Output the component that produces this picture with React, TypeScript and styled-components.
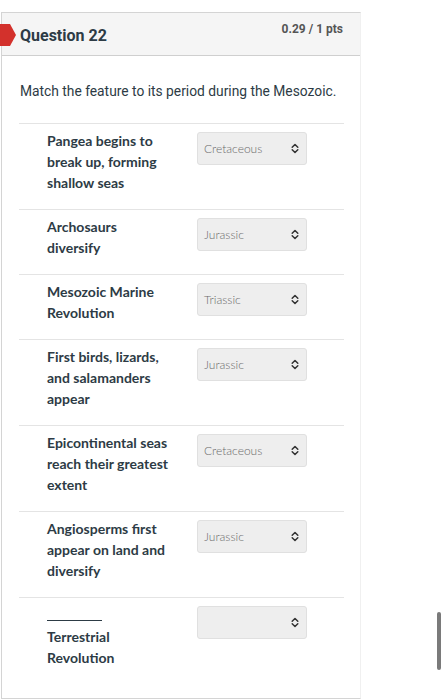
import styled, { createGlobalStyle } from 'styled-components'

const GlobalStyle = createGlobalStyle`
    html, body {
        margin: 0;
        padding: 0;
        background: #ffffff;
    }
    body {
        font-family: Roboto, "Liberation Sans", sans-serif;
        color: #2d3b45;
    }
`

const Page = styled.div`
    display: flex;
    flex-direction: row;
    width: 445px;
    height: 700px;
    overflow: hidden;
    padding-top: 12px;
    box-sizing: border-box;
`

const Card = styled.div`
    position: relative;
    width: 360px;
    height: 687px;
    margin-left: 1px;
    border: 1px solid #d4d4d4;
    border-right-color: #f0f0f0;
    box-sizing: border-box;
    display: flex;
    flex-direction: column;
`

const Header = styled.div`
    display: flex;
    flex-direction: row;
    justify-content: space-between;
    height: 43px;
    background: #f5f5f5;
    border-bottom: 1px solid #cfcfcf;
    box-sizing: border-box;
    padding: 0 17px 0 18px;
`

const Marker = styled.svg`
    position: absolute;
    left: -2px;
    top: 11px;
`

const Title = styled.h2`
    margin: 0;
    padding-top: 13px;
    font-size: 16px;
    font-weight: 700;
    color: #2d3b45;
`

const Points = styled.div`
    padding-top: 9px;
    font-size: 12px;
    font-weight: 700;
    color: #555;
`

const Body = styled.div`
    padding: 0 16px 0 17px;
`

const Prompt = styled.p`
    margin: 27px 0 0 1px;
    font-size: 13.8px;
    line-height: 16px;
    color: #2d3b45;
`

const Table = styled.div`
    margin-top: 24px;
    display: flex;
    flex-direction: column;
`

const Row = styled.div`
    display: flex;
    flex-direction: row;
    border-top: 1px solid #e4e4e4;
    padding: 6px 0 16px 28px;
`

const Label = styled.div`
    width: 150px;
    font-family: Lato, "Liberation Sans", sans-serif;
    font-size: 14px;
    font-weight: 700;
    line-height: 21px;
    color: #2d3b45;
`

const Blank = styled.div`
    width: 55px;
    height: 1px;
    margin: 16px 0 5px;
    background: #2d3b45;
`

const Select = styled.div`
    display: flex;
    flex-direction: row;
    align-items: center;
    justify-content: space-between;
    width: 110px;
    height: 33px;
    margin-top: 2px;
    padding: 0 7px 0 6px;
    box-sizing: border-box;
    background: #eeeeee;
    border: 1px solid #e0e0e0;
    border-radius: 3px;
    font-family: Lato, "Liberation Sans", sans-serif;
    font-size: 12px;
    font-weight: 300;
    color: #6b6b6b;
`

const Scrollbar = styled.div`
    position: absolute;
    right: 4px;
    top: 612px;
    width: 4px;
    height: 58px;
    border-radius: 2px;
    background: #7a7a7a;
`

const Chevrons = () => (
    <svg width="8" height="11" viewBox="0 0 8 11">
        <path d="M1.2 4.3 L4 1.5 L6.8 4.3 M1.2 6.7 L4 9.5 L6.8 6.7" fill="none" stroke="#333" strokeWidth="1.5" strokeLinecap="round" strokeLinejoin="round" />
    </svg>
)

const items = [
    { label: ['Pangea begins to', 'break up, forming', 'shallow seas'], value: 'Cretaceous' },
    { label: ['Archosaurs', 'diversify'], value: 'Jurassic' },
    { label: ['Mesozoic Marine', 'Revolution'], value: 'Triassic' },
    { label: ['First birds, lizards,', 'and salamanders', 'appear'], value: 'Jurassic' },
    { label: ['Epicontinental seas', 'reach their greatest', 'extent'], value: 'Cretaceous' },
    { label: ['Angiosperms first', 'appear on land and', 'diversify'], value: 'Jurassic' },
]

export default function App() {
    return (
        <>
        <GlobalStyle />
        <Page>
            <Card>
                <Marker width="17" height="22" viewBox="0 0 17 22">
                    <path d="M0 0 H10 L16 11 L10 22 H0 Z" fill="#d3312c" />
                </Marker>
                <Header>
                    <Title>Question 22</Title>
                    <Points>0.29 / 1 pts</Points>
                </Header>
                <Body>
                    <Prompt>Match the feature to its period during the Mesozoic.</Prompt>
                    <Table>
                        {items.map((item, i) =>
                            <Row key={i}>
                                <Label>
                                    {item.label.map((line, j) => <div key={j}>{line}</div>)}
                                </Label>
                                <Select>
                                    <span>{item.value}</span>
                                    <Chevrons />
                                </Select>
                            </Row>
                        )}
                        <Row>
                            <Label>
                                <Blank />
                                <div>Terrestrial</div>
                                <div>Revolution</div>
                            </Label>
                            <Select>
                                <span></span>
                                <Chevrons />
                            </Select>
                        </Row>
                    </Table>
                </Body>
            </Card>
            <Scrollbar />
        </Page>
        </>
    )
}
